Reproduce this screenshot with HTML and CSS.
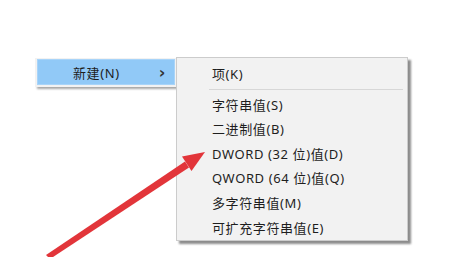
FILE: index.html
```html
<!DOCTYPE html>
<html lang="zh-CN">
<head>
<meta charset="utf-8">
<link rel="stylesheet" href="styles.css">
</head>
<body>
<div class="stage">
  <div class="parent-menu">
    <div class="parent-item">
      <span class="label">新建(N)</span>
      <span class="chev">›</span>
    </div>
  </div>
  <div class="submenu">
    <div class="item">项(K)</div>
    <div class="sep"></div>
    <div class="item">字符串值(S)</div>
    <div class="item">二进制值(B)</div>
    <div class="item">DWORD (32 位)值(D)</div>
    <div class="item">QWORD (64 位)值(Q)</div>
    <div class="item">多字符串值(M)</div>
    <div class="item">可扩充字符串值(E)</div>
  </div>
  <svg class="arrow" width="474" height="257" viewBox="0 0 474 257">
    <polygon points="46,255 50,259 189,167.5 185,161.5" fill="#e2353a"/>
    <polygon points="205,152 191.5,171 182,156.5" fill="#e2353a"/>
  </svg>
</div>
</body>
</html>
```
FILE: styles.css
```css
html, body {
  margin: 0;
  padding: 0;
  background: #ffffff;
}
.stage {
  position: relative;
  width: 474px;
  height: 257px;
  overflow: hidden;
  display: flex;
  align-items: flex-start;
  font-family: "Noto Sans", "Noto Sans CJK SC", sans-serif;
  font-size: 13px;
  letter-spacing: 0.6px;
  color: #1e1e1e;
}
.parent-menu {
  margin-top: 58px;
  margin-left: 35px;
  padding: 1px 1px 2px 2px;
  background: #f2f2f2;
  box-shadow: 2px 2px 2px rgba(0,0,0,0.35);
}
.parent-item {
  width: 138px;
  height: 26px;
  box-sizing: border-box;
  background: #91c9f7;
  border: 1px solid #a8d4f9;
  display: flex;
  align-items: center;
  padding-left: 35px;
  padding-right: 8px;
}
.parent-item .label {
  flex: 1;
}
.parent-item .chev {
  font-size: 16px;
  font-weight: bold;
  color: #333;
  font-family: "DejaVu Sans", sans-serif;
}
.submenu {
  margin-top: 57px;
  width: 232px;
  box-sizing: border-box;
  background: #f2f2f2;
  border: 1px solid #cccccc;
  padding: 3.5px 0 0 0;
  box-shadow: 3px 3px 2px rgba(0,0,0,0.45);
}
.item {
  height: 24.6px;
  line-height: 24.6px;
  padding-left: 35px;
  white-space: nowrap;
}
.sep {
  height: 1px;
  background: #d7d7d7;
  margin: 3px 4px 2.5px 32px;
}
.arrow {
  position: absolute;
  left: 0;
  top: 0;
  pointer-events: none;
}
```
